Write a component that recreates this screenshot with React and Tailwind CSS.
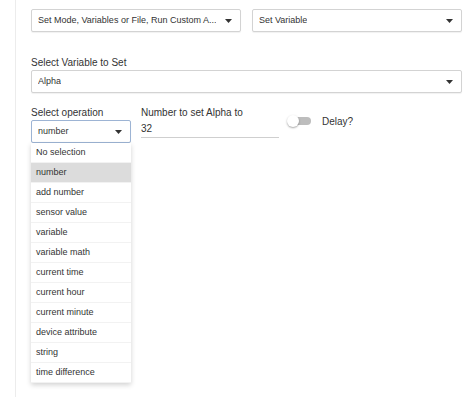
import { useState } from 'react'

const ops = [
  'No selection',
  'number',
  'add number',
  'sensor value',
  'variable',
  'variable math',
  'current time',
  'current hour',
  'current minute',
  'device attribute',
  'string',
  'time difference',
]

function Caret() {
  return (
    <svg width="7" height="4" viewBox="0 0 7 4" className="shrink-0">
      <path d="M0 0 L7 0 L3.5 4 Z" fill="#333" />
    </svg>
  )
}

function Select({ value, className = '', focused = false }) {
  return (
    <div
      className={`flex items-center justify-between h-[23px] pl-[6px] pr-[8px] bg-white rounded-[2px] border ${
        focused ? 'border-[#9db4d4]' : 'border-[#d3d3d3]'
      } shadow-[0_1px_1px_rgba(0,0,0,0.06)] ${className}`}
    >
      <span className="text-[9px] text-[#333] truncate">{value}</span>
      <Caret />
    </div>
  )
}

export default function App() {
  const [selected] = useState('number')

  return (
    <div
      className="flex w-[474px] h-[397px] bg-white overflow-hidden"
      style={{ fontFamily: "'Liberation Sans', Arial, sans-serif" }}
    >
      <div className="w-[15px] shrink-0" />
      <div className="flex-1 border-l border-[#ececec] pl-[15px] pt-[9px] pr-[11px]">
        {/* Top row */}
        <div className="flex gap-[11px]">
          <Select value="Set Mode, Variables or File, Run Custom A..." className="w-[210px]" />
          <Select value="Set Variable" className="w-[210px]" />
        </div>

        {/* Variable */}
        <div className="mt-[25px] text-[10px] leading-[12px] text-[#333]">Select Variable to Set</div>
        <Select value="Alpha" className="mt-[1px] w-[431px]" />

        {/* Operation row */}
        <div className="flex mt-[14px]">
          <div className="relative w-[100px]">
            <div className="text-[10px] leading-[12px] text-[#333]">Select operation</div>
            <Select value={selected} focused className="mt-[1px] w-[100px]" />
            {/* Open dropdown */}
            <div className="absolute left-0 top-[36px] w-[100px] bg-white shadow-[0_2px_5px_rgba(0,0,0,0.18)] z-10">
              {ops.map((op) => (
                <div
                  key={op}
                  className={`h-[20px] flex items-center pl-[5px] text-[9px] text-[#333] border-b border-[#f2f2f2] ${
                    op === selected ? 'bg-[#dcdcdc]' : ''
                  }`}
                >
                  {op}
                </div>
              ))}
            </div>
          </div>

          <div className="ml-[10px] w-[138px]">
            <div className="text-[10px] leading-[12px] text-[#333]">Number to set Alpha to</div>
            <div className="mt-[3px] text-[10px] leading-[14px] text-[#333] border-b border-[#cfcfcf] pb-[1px]">32</div>
          </div>

          <div className="flex items-center ml-[10px] h-[26px] mt-[1px]">
            <div className="relative w-[22px] h-[8px] rounded-full bg-[#bdbdbd]">
              <div className="absolute left-[-2px] top-[-2px] w-[12px] h-[12px] rounded-full bg-white shadow-[0_1px_2px_rgba(0,0,0,0.35)]" />
            </div>
            <span className="ml-[11px] text-[10px] text-[#333]">Delay?</span>
          </div>
        </div>
      </div>
    </div>
  )
}
